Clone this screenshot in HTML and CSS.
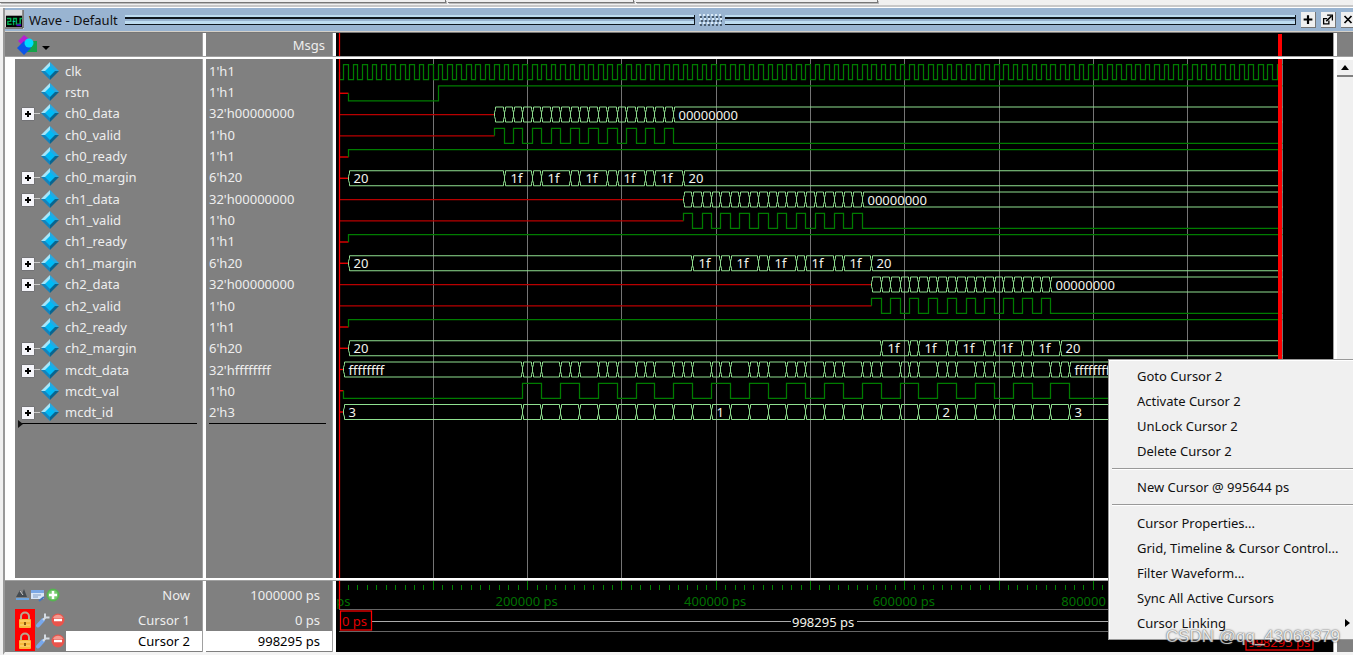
FILE: index.html
```html
<!DOCTYPE html>
<html lang="en">
<head>
<meta charset="utf-8">
<title>Wave - Default</title>
<link rel="stylesheet" href="styles.css">
</head>
<body>
<svg class="defs" aria-hidden="true">
  <symbol id="diamond" viewBox="0 0 20 20">
    <path d="M10 1 19 10H10z" fill="#27a8e0"/><path d="M10 1 1 10h9z" fill="#a5e6fb"/>
    <path d="M1 10 10 19V10z" fill="#1284be"/><path d="M19 10 10 19V10z" fill="#08658f"/>
    <path d="M10 5 15 10 10 15 5 10z" fill="#00baf5"/>
  </symbol>
  <symbol id="lock" viewBox="0 0 16 18">
    <path d="M4 9V5.500a4 4 0 0 1 8 0V9" fill="none" stroke="#b9a890" stroke-width="2"/>
    <rect x="2" y="8" width="12" height="9" rx="1" fill="#f6b93c"/><path d="M3 10h10M3 14h10" stroke="#ffdc80"/>
    <path d="M8 11v3" stroke="#8a5a10" stroke-width="2"/>
  </symbol>
  <symbol id="wrench" viewBox="0 0 16 16">
    <path d="M3 13.500 8 8" stroke="#78a8ec" stroke-width="4" stroke-linecap="round"/>
    <path d="M8 8l3-3M10 1.500v4h4.500" fill="none" stroke="#d5dce4" stroke-width="2"/>
  </symbol>
  <symbol id="minus" viewBox="0 0 16 16">
    <circle cx="8" cy="8" r="6.500" fill="#e9544c"/><path d="M3 6a5.500 5.500 0 0 1 10 0z" fill="#f49a90"/><path d="M4 8h8" stroke="#fff" stroke-width="2.500"/>
  </symbol>
</svg>
<div class="toolbars"><div class="bar bar-a"></div><div class="bar bar-b"></div><div class="bar bar-c"></div></div>
<main class="pane">
  <header class="title">
    <svg class="app-icon" viewBox="0 0 20 20"><path d="M0 0h20v20H0z" fill="#ddd"/><path d="M1 6h17v12H1z"/><path d="M2 9h4v3H3v3h4M9 16V9h3v6h4V9h2" fill="none" stroke="#00b050" stroke-width="1.500"/><path d="M8 12h3" stroke="#0cc"/><path d="M12 16h5" stroke="#40b" stroke-width="2"/><path d="M19 0v19H0" fill="none" stroke="#222"/></svg>
    <h1>Wave - Default</h1>
    <div class="rail"></div>
    <svg class="grip" viewBox="0 0 24 12"><g stroke-dasharray="2 2" stroke-width="2"><path d="M1 1h22M2 5h22M1 9h22" stroke="#d9eaf7"/><path d="M2 3h22M3 7h21M2 11h22" stroke="#30404f" stroke-width="1.500"/></g></svg>
    <div class="rail"></div>
    <div class="tools">
      <button aria-label="Maximize"><svg viewBox="0 0 16 16"><path d="M8 3v10M3 8h10" stroke="#000" stroke-width="2.500"/></svg></button>
      <button aria-label="Undock"><svg viewBox="0 0 16 16" fill="none" stroke="#000" stroke-width="1.500"><path d="M7 7H3v6h6V9M7 3h6v6"/><path d="M6 10l6-6" stroke-width="2"/></svg></button>
      <button aria-label="Close"><svg viewBox="0 0 16 16"><path d="M4 4l8 8M12 4l-8 8" stroke="#000" stroke-width="2"/></svg></button>
    </div>
  </header>
  <section class="row head">
    <div class="cell names-head">
      <svg class="shapes" viewBox="0 0 20 20"><path d="M1 6 7 0l5 4-7 6z" fill="#b71fd0"/><path d="M10 6h10v11H10z" fill="#15a34a"/><path d="M7 6l7 7-7 7-7-7z" fill="#0b55e8"/><circle cx="12" cy="8" r="4.500" fill="#00dcff"/></svg>
      <span class="caret"></span>
    </div>
    <div class="cell msgs">Msgs</div>
    <div class="cell wave"><svg id="top"></svg></div>
    <div class="cell"></div>
  </section>
  <section class="row body">
    <div class="cell names"><ul class="list" id="names"></ul></div>
    <div class="cell values"><ul class="list" id="values"></ul></div>
    <div class="cell wave"><svg id="waves"></svg></div>
    <div class="cell scroll"><button aria-label="Scroll up"><span class="up"></span></button></div>
  </section>
  <section class="row foot">
    <div class="cell">
      <div class="line now"><span class="icons">
        <svg viewBox="0 0 16 16"><path d="M1 10 5 3l2 4 2-5 3 8z" fill="#454b50"/><path d="M5 4l3 4" stroke="#ccc"/><path d="M1 12h13" stroke="#6da5e0" stroke-width="2"/></svg>
        <svg viewBox="0 0 16 16"><path d="M1 3h13v9H1z" fill="#d8e6f8"/><path d="M1 3h13v3H1z" fill="#7ba8e6"/><path d="M3 8h8M3 10h5" stroke="#809cc4"/><path d="M9 14l5-4" stroke="#4776b9" stroke-width="2"/></svg>
        <svg viewBox="0 0 16 16"><circle cx="8" cy="8" r="6.500" fill="#55b550"/><circle cx="8" cy="8" r="5" fill="#78cb70"/><path d="M8 4v8M4 8h8" stroke="#fff" stroke-width="2.500"/></svg></span><span class="label">Now</span></div>
      <div class="line"><span class="lock"><svg><use href="#lock"/></svg></span><span class="icons"><svg><use href="#wrench"/></svg><svg><use href="#minus"/></svg></span><span class="label">Cursor 1</span></div>
      <div class="line"><span class="lock"><svg><use href="#lock"/></svg></span><span class="icons"><svg><use href="#wrench"/></svg><svg><use href="#minus"/></svg></span><span class="label active">Cursor 2</span></div>
    </div>
    <div class="cell">
      <div class="line now"><span class="label">1000000 ps</span></div>
      <div class="line"><span class="label">0 ps</span></div>
      <div class="line"><span class="label active">998295 ps</span></div>
    </div>
    <div class="cell wave"><svg id="time"></svg></div>
    <div class="cell"></div>
  </section>
</main>
<nav class="menu">
  <button>Goto Cursor 2</button><button>Activate Cursor 2</button><button>UnLock Cursor 2</button><button>Delete Cursor 2</button>
  <hr>
  <button>New Cursor @ 995644 ps</button>
  <hr>
  <button>Cursor Properties...</button><button>Grid, Timeline &amp; Cursor Control...</button><button>Filter Waveform...</button><button>Sync All Active Cursors</button><button class="sub">Cursor Linking</button>
</nav>
<div class="watermark">CSDN @qq_43068379</div>
<script src="wave.js"></script>
</body>
</html>
```
FILE: styles.css
```css
* { box-sizing: border-box; }
body { margin: 0; min-height: 100vh; display: flex; flex-direction: column; position: relative; overflow: hidden; background: #f0f0f0; color: #111; font: 13px/20px "Noto Sans", "Open Sans", sans-serif; }
button { font: inherit; color: inherit; padding: 0; border: 0; background: none; }
svg { display: block; flex: none; }
.defs { position: absolute; width: 0; height: 0; }
.toolbars { display: flex; gap: 2px; height: 8px; padding-bottom: 4px; border-bottom: 1px solid #fff; box-shadow: inset 0 -2px #c8c8c8; }
.bar { border: solid #777; border-width: 0 1px 1px 0; box-shadow: 1px 1px #bbb; }
.bar-a { width: 33%; }
.bar-b { width: 186px; }
.bar-c { width: 242px; }
.pane { flex: 1; display: flex; flex-direction: column; margin-left: 3px; border-left: 2px solid #999; background: #fff; border-bottom: 3px solid #f4f4f4; }
.title { display: flex; align-items: center; height: 23px; background: #99b4d1; margin-right: -3px; }
.app-icon { width: 19px; height: 19px; }
.title h1 { margin: 0 7px 0 5px; font-size: 13px; font-weight: 400; white-space: nowrap; }
.rail { flex: 1; height: 10px; border: solid #101820; border-width: 0 1px 1px 0; background: linear-gradient(#bddcf0 0 2px, #101820 2px 4px, #99b4d1 4px 6px, #bddcf0 6px 9px); }
.grip { width: 24px; height: 12px; margin: 0 3px; }
.tools { display: flex; gap: 5px; margin-left: 5px; }
.tools button { width: 15px; height: 16px; background: #f0f0f0; border: solid #777; border-width: 0 1px 1px 0; }
.tools svg { width: 14px; height: 15px; }
.row { display: grid; grid-template-columns: 197px 126px 1fr 16px; grid-template-rows: minmax(0, 1fr); column-gap: 4px; }
.cell { background: #808080; box-shadow: 1px 0 #a0a0a0; min-width: 0; min-height: 0; }
.wave { background: #000; }
.wave svg { width: 100%; height: 100%; }
.head { height: 25px; padding-top: 2px; background: linear-gradient(#d4d0c8 1px, #777 1px 2px, #fff 2px); }
.names-head { display: flex; align-items: center; gap: 5px; padding-left: 12px; }
.shapes { width: 20px; height: 20px; }
.caret { margin-top: 6px; border: solid transparent; border-width: 4px 4px 0; border-top-color: #000; }
.msgs { padding: 2px 7px; text-align: right; color: #eee; }
.body { flex: 1; border: solid #a0a0a0; border-width: 1px 0; padding: 2px 0; }
.names { border-left: 10px solid #fff; }
.list { display: grid; grid-template-rows: repeat(17, 1fr); height: 364px; margin: 1px 5px 0 3px; padding: 0; list-style: none; color: #eee; border-bottom: 1px solid #000; position: relative; }
.names .list::before { content: ""; position: absolute; left: 0; bottom: -5px; border: solid transparent; border-width: 4px 0 4px 5px; border-left-color: #111; }
.list li { display: flex; align-items: center; }
.values .list { margin: 1px 6px 0 3px; }
.list svg { width: 20px; height: 20px; }
.slot { display: flex; align-items: center; width: 22px; padding-left: 4px; }
.slot button { flex: none; width: 12px; height: 12px; margin-top: 2px; background: #f5f5fa; box-shadow: 0 0 1px #334; }
.slot button svg { width: 12px; height: 12px; }
.slot::after { flex: 1; content: ""; }
.has-kids::after { border-top: 1px solid #ccc; }
.list .name { margin-left: 5px; }
.scroll { background: #f0f0f0; }
.scroll button { width: 100%; height: 18px; display: flex; align-items: center; justify-content: center; border-bottom: 2px solid #808080; border-top: 1px solid #fff; }
.up { border: solid transparent; border-width: 0 4px 5px; border-bottom-color: #000; }
.foot { height: 71px; }
.line { display: flex; align-items: center; height: 21px; color: #eee; }
.now { height: 28px; }
.now .icons { margin-left: 10px; }
.icons { display: flex; }
.icons svg { width: 16px; height: 16px; }
.line .icons svg + svg { margin-left: -1px; }
.lock { align-self: stretch; display: grid; place-items: center; width: 20px; margin-left: 10px; background: #f00; }
.lock svg { width: 16px; height: 18px; }
.label { flex: 1; padding-right: 12px; text-align: right; }
.active { background: #fff; color: #000; }
.red { fill: none; stroke: #b80000; stroke-width: 1.25; }
.bright { stroke: #f00; }
.bit { fill: none; stroke: #007c00; stroke-width: 1.25; }
.bus { fill: none; stroke: #90e090; }
.grid { stroke: #747474; }
.tick { stroke: #008000; }
.cursor { stroke: #f00; stroke-width: 4; }
.rule { stroke: #666; }
.span { stroke: #aaa; }
.wave text { fill: #f4f4ec; }
.wave .green { fill: #007000; text-anchor: middle; }
.wave .redtext { fill: #e00000; }
.mask { fill: #000; }
.menu { position: absolute; right: 0; bottom: 15px; width: 245px; display: flex; flex-direction: column; padding: 3px 0 4px 3px; background: #f0f0f0; border: solid #999; border-width: 1px 0 1px 1px; box-shadow: inset 1px 1px #fff; }
.menu button { height: 25px; padding-left: 25px; text-align: left; white-space: nowrap; }
.menu hr { width: 100%; height: 2px; margin: 5px 0 4px; border: solid; border-width: 1px 0; border-color: #999 transparent #fff; }
.menu .sub { display: flex; align-items: center; justify-content: space-between; padding-right: 3px; }
.sub::after { content: ""; border: solid transparent; border-width: 4px 0 4px 5px; border-left-color: #000; }
.watermark { position: absolute; right: 13px; bottom: 8px; font: 17px/20px "Liberation Sans", sans-serif; color: #e8e8e8; text-shadow: 0 0 2px #444, 0 0 1px #555; opacity: .8; }
```
FILE: wave.js
```javascript
const START = 3, STEP = 9.43, END = 100;
const px = t => START + t * STEP;
const snap = t => Math.floor(px(t)) + 0.5;
const path = (cls, d) => `<path class="${cls}" d="${d}"/>`;
const vline = (cls, x, y1, y2) => `<line class="${cls}" x1="${x}" x2="${x}" y1="${y1}" y2="${y2}"/>`;
const text = (cls, x, y, s) => `<text class="${cls}" x="${x}" y="${y}">${s}</text>`;

const toggles = (from, step, count) => Array.from({ length: count }, (_, i) => from + i * step);
const dataBus = s => ({ from: s, edges: toggles(s, 1, 20), labels: { [s + 19]: '00000000' } });
const marginBus = s => {
  const edges = [1], labels = { 1: '20', [s + 19]: '20' };
  for (let k = 0; k < 5; k++) { edges.push(s + 4 * k, s + 4 * k + 3); labels[s + 4 * k] = '1f'; }
  return { from: 1, edges, labels };
};
const mcdt = [0.5];
for (let k = 0; k < 15; k++) mcdt.push(19.5 + 4 * k, 20.5 + 4 * k, 21.5 + 4 * k);

const signals = [
  ['clk', "1'h1", { from: 0, bits: toggles(0.5, 0.5, 199), level: 0 }],
  ['rstn', "1'h1", { from: 1, bits: [10.5], level: 0 }]
];
[0, 1, 2].forEach(n => {
  const s = 16.5 + 20 * n;
  signals.push(
    [`ch${n}_data`, "32'h00000000", dataBus(s)],
    [`ch${n}_valid`, "1'h0", { from: s, bits: toggles(s + 1, 1, 19), level: 1 }],
    [`ch${n}_ready`, "1'h1", { from: 1, bits: [], level: 1 }],
    [`ch${n}_margin`, "6'h20", marginBus(s + 1)]
  );
});
signals.push(
  ['mcdt_data', "32'hffffffff", { from: 0.5, edges: mcdt, labels: { 0.5: 'ffffffff', 77.5: 'ffffffff' } }],
  ['mcdt_val', "1'h0", { from: 0.5, bits: toggles(19.5, 2, 30), level: 0 }],
  ['mcdt_id', "2'h3", { from: 0.5, edges: [0.5, ...toggles(19.5, 2, 30)], labels: { 0.5: '3', 39.5: '1', 63.5: '2', 77.5: '3' } }]
);

const plus = '<button aria-label="Expand"><svg viewBox="0 0 12 12"><path d="M6 3v6M3 6h6" stroke="#000" stroke-width="2"/></svg></button>';
document.getElementById('names').innerHTML = signals.map(([name, , w]) =>
  `<li><span class="slot ${w.edges ? 'has-kids' : ''}">${w.edges ? plus : ''}</span><svg><use href="#diamond"/></svg><span class="name">${name}</span></li>`).join('');
document.getElementById('values').innerHTML = signals.map(s => `<li>${s[1]}</li>`).join('');

let out = '';
for (let i = 1; i <= 10; i++) out += vline('grid', snap(i * 10), 0, '100%');
signals.forEach(([, , w], i) => {
  const mid = 13 + i * 21.25, top = mid - 7.5, low = mid + 7.5;
  if (w.from) out += path(w.from > 1 ? 'red' : 'red bright', `M${START}.5 ${mid}H${snap(w.from)}`);
  if (w.bits) {
    let level = w.level;
    let d = `M${snap(w.from)} ${mid}V${level ? top : low}`;
    w.bits.forEach(t => { level = 1 - level; d += `H${snap(t)}V${level ? top : low}`; });
    out += path('bit', d + `H${snap(END)}`);
  } else {
    w.edges.forEach((t, k) => {
      const last = k === w.edges.length - 1;
      const a = snap(t), b = snap(last ? END : w.edges[k + 1]);
      out += path('bus', last
        ? `M${b} ${top}H${a + 1}V${mid - 5}L${a} ${mid - 2}V${mid + 2}L${a + 1} ${mid + 5}V${low}H${b}`
        : `M${a + 1} ${top}H${b - 1}V${mid - 5}L${b} ${mid - 2}V${mid + 2}L${b - 1} ${mid + 5}V${low}H${a + 1}V${mid + 5}L${a} ${mid + 2}V${mid - 2}L${a + 1} ${mid - 5}Z`);
      if (w.labels[t]) out += text('', a + (w.labels[t] === '1f' ? 6 : 5), mid + 5, w.labels[t]);
    });
  }
});
out += vline('red bright', START + 0.5, 0, '100%') + vline('cursor', px(END) - 2, 0, '100%');
document.getElementById('waves').innerHTML = out;
document.getElementById('top').innerHTML = vline('red bright', START + 0.5, 0, '100%') + vline('cursor', px(END) - 2, 1, '100%');

let time = '';
for (let i = 1; i <= 100; i++) time += i % 10 ? vline('tick', snap(i), 4, 9) : vline('tick', snap(i), 0, 9);
for (let i = 0; i <= 10; i += 2) time += text('green', px(i * 10) - 1, 25, i ? `${i}00000 ps` : '0 ps');
time += path('rule', 'M3 28.500H994M3 50.500H994') + path('span', `M35 40.500H${px(END) - 3}`);
time += '<rect class="mask" x="455" y="31" width="66" height="18"/>' + text('', 456, 46, '998295 ps');
time += '<rect class="red bright" x="4.500" y="30" width="31" height="19"/>' + text('redtext', 6, 45, '0 ps');
time += vline('red bright', START + 0.5, 0, 28) + vline('cursor', px(END) - 2, 0, 50);
time += '<rect class="red bright" x="910" y="52" width="67" height="17"/>' + text('redtext', 912, 66, '998295 ps');
document.getElementById('time').innerHTML = time;
```
